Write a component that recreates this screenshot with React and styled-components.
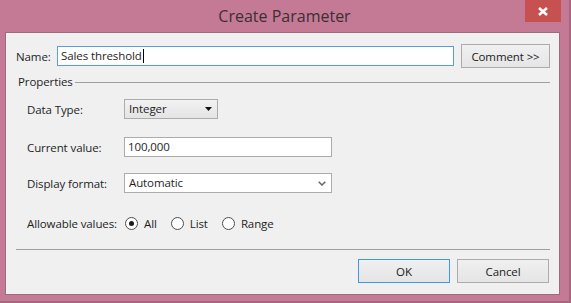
import React from 'react'
import styled, { createGlobalStyle } from 'styled-components'

const GlobalStyle = createGlobalStyle`
  html, body {
    margin: 0;
    padding: 0;
    background: #c47994;
  }
  body {
    font-family: "Segoe UI", "Open Sans", "Noto Sans", sans-serif;
    font-size: 11.5px;
    letter-spacing: -0.1px;
    color: #1e1e1e;
  }
`

const Window = styled.div`
  width: 571px;
  height: 303px;
  box-sizing: border-box;
  background: #c47994;
  border-right: 2px solid #a8657e;
  border-bottom: 2px solid #a8657e;
  display: flex;
  flex-direction: column;
`

const TitleBar = styled.div`
  height: 32px;
  display: grid;
  grid-template-columns: 1fr auto 1fr;
  align-items: start;
  padding: 0 8px;
`

const Title = styled.div`
  grid-column: 2;
  margin-top: 5px;
  font-size: 16px;
  letter-spacing: 0;
  line-height: 22px;
  color: #3a3034;
`

const CloseButton = styled.div`
  grid-column: 3;
  justify-self: end;
  width: 36px;
  height: 22px;
  background: #c75050;
  display: flex;
  align-items: center;
  justify-content: center;
`

const Client = styled.div`
  margin: 0 9px 0 5px;
  height: 263px;
  box-sizing: border-box;
  background: #f0f0f0;
  border: 1px solid #9c6c7e;
  padding: 11px 9px 0 10px;
  display: flex;
  flex-direction: column;
`

const NameRow = styled.div`
  display: flex;
  align-items: center;
  height: 24px;
`

const NameLabel = styled.label`
  width: 41px;
  flex: none;
`

const TextBox = styled.div`
  box-sizing: border-box;
  height: 20px;
  width: ${({ $w }) => ($w ? `${$w}px` : 'auto')};
  flex: ${({ $w }) => ($w ? 'none' : '1')};
  background: #fff;
  border: 1px solid ${({ $focus }) => ($focus ? '#5a9ee0' : '#ababab')};
  padding: 0 3px;
  display: flex;
  align-items: center;
  line-height: 18px;
  white-space: nowrap;
`

const Caret = styled.span`
  display: inline-block;
  width: 1px;
  height: 14px;
  background: #000;
  margin-left: 1px;
`

const Button = styled.div`
  box-sizing: border-box;
  width: ${({ $w }) => $w}px;
  height: 24px;
  flex: none;
  margin-left: ${({ $ml }) => $ml || 0}px;
  border: 1px solid ${({ $default }) => ($default ? '#3c9ae8' : '#acacac')};
  background: linear-gradient(#f0f0f0, #e5e5e5);
  display: flex;
  align-items: center;
  justify-content: center;
  color: #1a1a1a;
`

const SectionHead = styled.div`
  display: flex;
  align-items: center;
  height: 16px;
  margin-top: 6px;
`

const SectionTitle = styled.span`
  padding-left: 2px;
  line-height: 16px;
`

const SectionLine = styled.div`
  flex: 1;
  height: 1px;
  background: #a0a0a0;
  margin-left: 2px;
`

const FieldRow = styled.div`
  display: flex;
  align-items: center;
  height: 20px;
  margin-top: ${({ $mt }) => $mt}px;
  padding-left: 11px;
`

const FieldLabel = styled.label`
  width: ${({ $w }) => $w || 97}px;
  flex: none;
`

const Combo = styled.div`
  box-sizing: border-box;
  width: ${({ $w }) => $w}px;
  height: 20px;
  border: 1px solid #acacac;
  background: ${({ $flat }) => ($flat ? '#fff' : 'linear-gradient(#f2f2f2, #e4e4e4)')};
  display: flex;
  align-items: center;
  justify-content: space-between;
  padding: 0 5px 0 4px;
  line-height: 18px;
`

const RadioGroup = styled.div`
  display: flex;
  align-items: center;
`

const RadioItem = styled.div`
  display: flex;
  align-items: center;
  margin-right: ${({ $mr }) => $mr}px;
`

const RadioCircle = styled.span`
  box-sizing: border-box;
  width: 13px;
  height: 13px;
  border-radius: 50%;
  border: 1px solid #4f4f4f;
  background: #fff;
  display: flex;
  align-items: center;
  justify-content: center;
  margin-right: 6px;

  &::after {
    content: '';
    width: 5px;
    height: 5px;
    border-radius: 50%;
    background: ${({ $checked }) => ($checked ? '#1a1a1a' : 'transparent')};
  }
`

const Separator = styled.div`
  height: 1px;
  background: #a0a0a0;
  margin-top: 16px;
`

const ButtonRow = styled.div`
  display: flex;
  justify-content: flex-end;
  gap: 7px;
  margin-top: 9px;
  padding-right: 1px;
`

const CloseIcon = () => (
  <svg width="10" height="9" viewBox="0 0 10 9">
    <path d="M1 1 L9 8 M9 1 L1 8" stroke="#fff" strokeWidth="2.6" />
  </svg>
)

const TriangleIcon = () => (
  <svg width="7" height="4" viewBox="0 0 7 4">
    <path d="M0 0 H7 L3.5 4 Z" fill="#111" />
  </svg>
)

const ChevronIcon = () => (
  <svg width="8" height="5" viewBox="0 0 8 5">
    <path d="M0.7 0.7 L4 4 L7.3 0.7" fill="none" stroke="#6a6a6a" strokeWidth="1.6" />
  </svg>
)

export default function App() {
  return (
    <>
      <GlobalStyle />
      <Window>
        <TitleBar>
          <Title>Create Parameter</Title>
          <CloseButton>
            <CloseIcon />
          </CloseButton>
        </TitleBar>
        <Client>
          <NameRow>
            <NameLabel>Name:</NameLabel>
            <TextBox $focus>
              Sales threshold<Caret />
            </TextBox>
            <Button $w={89} $ml={7}>Comment &gt;&gt;</Button>
          </NameRow>

          <SectionHead>
            <SectionTitle>Properties</SectionTitle>
            <SectionLine />
          </SectionHead>

          <FieldRow $mt={9}>
            <FieldLabel>Data Type:</FieldLabel>
            <Combo $w={94}>
              Integer
              <TriangleIcon />
            </Combo>
          </FieldRow>

          <FieldRow $mt={18}>
            <FieldLabel>Current value:</FieldLabel>
            <TextBox $w={208}>100,000</TextBox>
          </FieldRow>

          <FieldRow $mt={16}>
            <FieldLabel>Display format:</FieldLabel>
            <Combo $w={208} $flat>
              Automatic
              <ChevronIcon />
            </Combo>
          </FieldRow>

          <FieldRow $mt={20}>
            <FieldLabel $w={98}>Allowable values:</FieldLabel>
            <RadioGroup>
              <RadioItem $mr={14}>
                <RadioCircle $checked />
                All
              </RadioItem>
              <RadioItem $mr={14}>
                <RadioCircle />
                List
              </RadioItem>
              <RadioItem $mr={0}>
                <RadioCircle />
                Range
              </RadioItem>
            </RadioGroup>
          </FieldRow>

          <Separator />

          <ButtonRow>
            <Button $w={92} $default>OK</Button>
            <Button $w={92}>Cancel</Button>
          </ButtonRow>
        </Client>
      </Window>
    </>
  )
}
